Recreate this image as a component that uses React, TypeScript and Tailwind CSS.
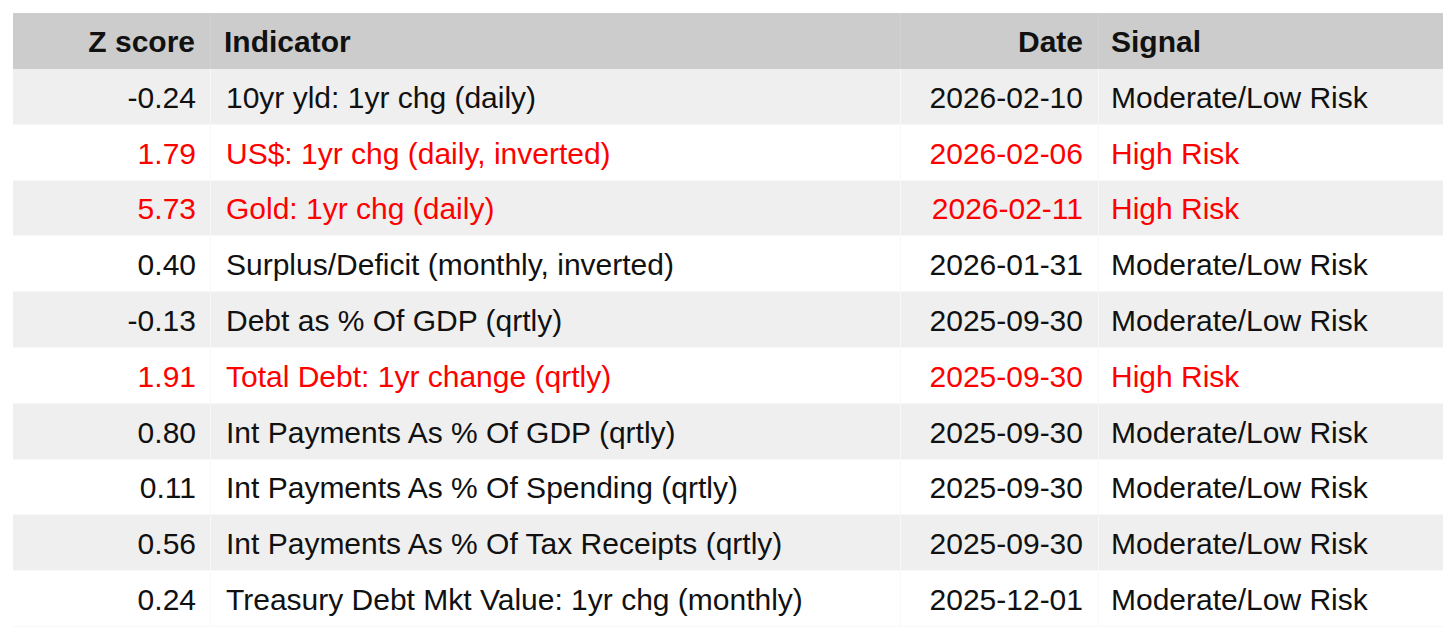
import React from 'react';

type Row = { z: string; indicator: string; date: string; signal: string; high?: boolean };

const ROWS: Row[] = [
  { z: '-0.24', indicator: '10yr yld: 1yr chg (daily)', date: '2026-02-10', signal: 'Moderate/Low Risk' },
  { z: '1.79', indicator: 'US$: 1yr chg (daily, inverted)', date: '2026-02-06', signal: 'High Risk', high: true },
  { z: '5.73', indicator: 'Gold: 1yr chg (daily)', date: '2026-02-11', signal: 'High Risk', high: true },
  { z: '0.40', indicator: 'Surplus/Deficit (monthly, inverted)', date: '2026-01-31', signal: 'Moderate/Low Risk' },
  { z: '-0.13', indicator: 'Debt as % Of GDP (qrtly)', date: '2025-09-30', signal: 'Moderate/Low Risk' },
  { z: '1.91', indicator: 'Total Debt: 1yr change (qrtly)', date: '2025-09-30', signal: 'High Risk', high: true },
  { z: '0.80', indicator: 'Int Payments As % Of GDP (qrtly)', date: '2025-09-30', signal: 'Moderate/Low Risk' },
  { z: '0.11', indicator: 'Int Payments As % Of Spending (qrtly)', date: '2025-09-30', signal: 'Moderate/Low Risk' },
  { z: '0.56', indicator: 'Int Payments As % Of Tax Receipts (qrtly)', date: '2025-09-30', signal: 'Moderate/Low Risk' },
  { z: '0.24', indicator: 'Treasury Debt Mkt Value: 1yr chg (monthly)', date: '2025-12-01', signal: 'Moderate/Low Risk' },
];

const cols = 'grid grid-cols-[198px_690px_198px_344px]';
const cell = 'flex items-center pt-[3px] border-r border-b border-[#f8f8f8] last:border-r-0';
const head = 'flex items-center pt-[2px] border-r border-[#d2d2d2] last:border-r-0';

export default function App() {
  return (
    <div className="min-h-screen bg-white pt-[13px] pl-[13px] font-['Liberation_Sans',Arial,sans-serif] text-[30px] leading-none">
      <div className="w-[1430px]">
        <div className={`${cols} h-[56px] bg-[#cccccc] font-bold text-[#111]`}>
          <div className={`${head} justify-end pr-[15px]`}>Z score</div>
          <div className={`${head} pl-[13px]`}>Indicator</div>
          <div className={`${head} justify-end pr-[15px]`}>Date</div>
          <div className={`${head} pl-[12px]`}>Signal</div>
        </div>
        {ROWS.map((r, i) => (
          <div
            key={i}
            className={`${cols} h-[55.8px] ${i % 2 === 0 ? 'bg-[#efefef]' : 'bg-white'} ${r.high ? 'text-[#ff0000]' : 'text-[#111]'}`}
          >
            <div className={`${cell} justify-end pr-[14px]`}>{r.z}</div>
            <div className={`${cell} pl-[15px]`}>{r.indicator}</div>
            <div className={`${cell} justify-end pr-[15px]`}>{r.date}</div>
            <div className={`${cell} pl-[12px]`}>{r.signal}</div>
          </div>
        ))}
      </div>
    </div>
  );
}
